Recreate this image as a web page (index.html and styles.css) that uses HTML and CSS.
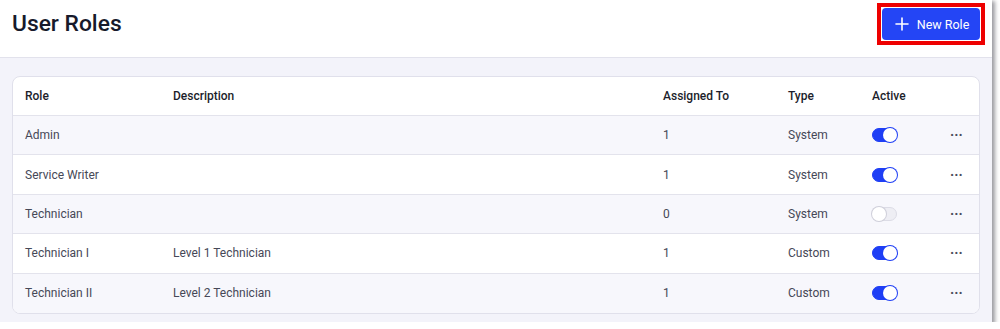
FILE: index.html
```html
<!DOCTYPE html>
<html>
<head>
<meta charset="utf-8">
<link rel="stylesheet" href="styles.css">
</head>
<body>
<div class="frame">
  <header class="topbar">
    <h1 class="title">User Roles</h1>
    <div class="highlight">
      <button class="btn-new">
        <svg width="14" height="14" viewBox="0 0 14 14"><path d="M7 1v12M1 7h12" stroke="#fff" stroke-width="1.6" stroke-linecap="round"/></svg>
        <span>New Role</span>
      </button>
    </div>
  </header>
  <main class="content">
    <div class="card">
      <div class="row head">
        <div class="c-role">Role</div>
        <div class="c-desc">Description</div>
        <div class="c-assign">Assigned To</div>
        <div class="c-type">Type</div>
        <div class="c-active">Active</div>
        <div class="c-more"></div>
      </div>
      <div class="row striped">
        <div class="c-role">Admin</div><div class="c-desc"></div><div class="c-assign">1</div><div class="c-type">System</div>
        <div class="c-active"><span class="toggle on"></span></div><div class="c-more">···</div>
      </div>
      <div class="row">
        <div class="c-role">Service Writer</div><div class="c-desc"></div><div class="c-assign">1</div><div class="c-type">System</div>
        <div class="c-active"><span class="toggle on"></span></div><div class="c-more">···</div>
      </div>
      <div class="row striped">
        <div class="c-role">Technician</div><div class="c-desc"></div><div class="c-assign">0</div><div class="c-type">System</div>
        <div class="c-active"><span class="toggle"></span></div><div class="c-more">···</div>
      </div>
      <div class="row">
        <div class="c-role">Technician I</div><div class="c-desc">Level 1 Technician</div><div class="c-assign">1</div><div class="c-type">Custom</div>
        <div class="c-active"><span class="toggle on"></span></div><div class="c-more">···</div>
      </div>
      <div class="row striped last">
        <div class="c-role">Technician II</div><div class="c-desc">Level 2 Technician</div><div class="c-assign">1</div><div class="c-type">Custom</div>
        <div class="c-active"><span class="toggle on"></span></div><div class="c-more">···</div>
      </div>
    </div>
  </main>
</div>
</body>
</html>
```
FILE: styles.css
```css
* { box-sizing: border-box; }
html, body { margin: 0; padding: 0; background: #fff; }
body { font-family: Roboto, "Noto Sans", sans-serif; color: #1c1e2b; }
.frame {
  width: 992px;
  height: 322px;
  display: flex;
  flex-direction: column;
  box-shadow: 2px 2px 4px 1px rgba(60,60,70,0.5);
  background: #f3f3fa;
}
.topbar {
  height: 58px;
  background: #fff;
  border-bottom: 1px solid #e2e2ec;
  display: flex;
  align-items: flex-start;
  justify-content: space-between;
  padding: 0 7px 0 12px;
}
.title {
  margin: 10px 0 0;
  font-size: 22.8px;
  font-weight: 500;
  color: #171a2b;
}
.highlight {
  margin-top: 3px;
  border: 4px solid #ee0000;
  padding: 1px;
  background: #fff;
}
.btn-new {
  width: 98px;
  height: 32px;
  background: #2445f5;
  border: none;
  border-radius: 4px;
  color: #fff;
  font-family: Roboto, sans-serif;
  font-size: 12.5px;
  font-weight: 400;
  display: flex;
  align-items: center;
  justify-content: center;
  gap: 8px;
  padding: 0 0 0 2px;
}
.content {
  flex: 1;
  padding: 18px 12px 0 12px;
}
.card {
  width: 968px;
  background: #fff;
  border: 1px solid #e0e0eb;
  border-radius: 8px;
  overflow: hidden;
}
.row {
  display: flex;
  align-items: center;
  height: 39.4px;
  border-bottom: 1px solid #e3e3ec;
  font-size: 12px;
  color: #464857;
}
.row.last { border-bottom: none; }
.row.striped { background: #f7f7fc; }
.row.head { height: 39px; font-weight: 500; color: #1c1e2b; }
.c-role { width: 160px; padding-left: 12px; }
.c-desc { width: 490px; }
.c-assign { width: 125px; }
.c-type { width: 84px; }
.c-active { width: 78px; display: flex; align-items: center; }
.c-more { width: 20px; font-size: 14px; font-weight: 700; color: #4a4c5a; }
.toggle {
  display: inline-block;
  position: relative;
  width: 25px;
  height: 14px;
  border-radius: 7px;
  background: #eeeef4;
  border: 1px solid #dcdce6;
}
.toggle::after {
  content: "";
  position: absolute;
  top: -1px;
  left: -1px;
  width: 14px;
  height: 14px;
  border-radius: 50%;
  background: #fff;
  box-shadow: 0 0 0 1px #cfcfda;
}
.toggle.on { background: #1f3ff5; border-color: #1f3ff5; }
.toggle.on::after { left: auto; right: -1px; box-shadow: 0 0 0 1px #1f3ff5; }
```
